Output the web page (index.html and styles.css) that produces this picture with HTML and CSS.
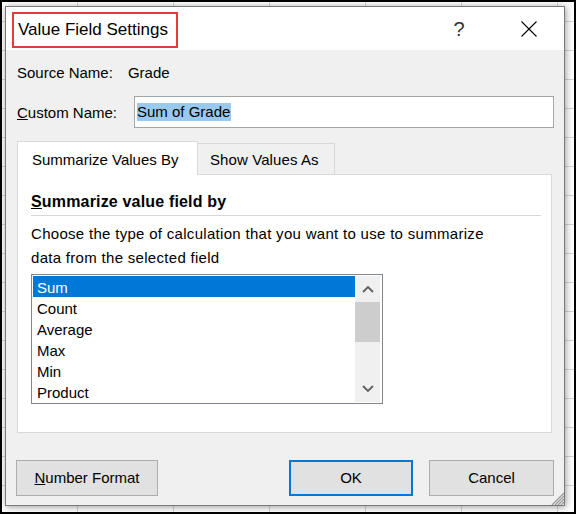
FILE: index.html
```html
<!DOCTYPE html>
<html>
<head>
<meta charset="utf-8">
<link rel="stylesheet" href="styles.css">
</head>
<body>
<div class="desktop">
  <div class="dialog">
    <div class="titlebar">
      <div class="title-box"><span class="title">Value Field Settings</span></div>
      <div class="help">?</div>
      <div class="close">
        <svg width="16" height="16" viewBox="0 0 16 16"><path d="M0.5 0.5 L15.5 15.5 M15.5 0.5 L0.5 15.5" stroke="#000" stroke-width="1.1" fill="none"/></svg>
      </div>
    </div>
    <div class="row source">
      <span class="label">Source Name:</span>
      <span class="value">Grade</span>
    </div>
    <div class="row custom">
      <span class="label custom-label"><u>C</u>ustom Name:</span>
      <div class="input"><span class="selected">Sum of Grade</span></div>
    </div>
    <div class="tabs">
      <div class="tab active">Summarize Values By</div>
      <div class="tab inactive">Show Values As</div>
    </div>
    <div class="panel">
      <div class="heading"><u>S</u>ummarize value field by</div>
      <div class="separator"></div>
      <p class="desc">Choose the type of calculation that you want to use to summarize<br>data from the selected field</p>
      <div class="listbox">
        <ul class="items">
          <li class="item selected-item">Sum</li>
          <li class="item">Count</li>
          <li class="item">Average</li>
          <li class="item">Max</li>
          <li class="item">Min</li>
          <li class="item">Product</li>
        </ul>
        <div class="scrollbar">
          <div class="sb-btn">
            <svg width="12" height="8" viewBox="0 0 12 8"><polyline points="1,7 6,2 11,7" fill="none" stroke="#606060" stroke-width="1.8"/></svg>
          </div>
          <div class="sb-thumb"></div>
          <div class="sb-track"></div>
          <div class="sb-btn">
            <svg width="12" height="8" viewBox="0 0 12 8"><polyline points="1,1 6,6 11,1" fill="none" stroke="#606060" stroke-width="1.8"/></svg>
          </div>
        </div>
      </div>
    </div>
    <div class="footer">
      <div class="btn btn-format"><u>N</u>umber Format</div>
      <div class="btn btn-ok">OK</div>
      <div class="btn btn-cancel">Cancel</div>
    </div>
    <svg class="grip" width="13" height="13" viewBox="0 0 13 13">
      <path d="M1 13 L13 1 M4 13 L13 4 M7 13 L13 7 M10 13 L13 10" stroke="#9a9a9a" stroke-width="1.3" fill="none"/>
    </svg>
  </div>
</div>
</body>
</html>
```

FILE: styles.css
```css
* { box-sizing: border-box; }
html, body { margin: 0; padding: 0; }
body {
  font-family: "Liberation Sans", Arial, sans-serif;
  font-size: 15px;
  color: #000;
  background: #000;
}
.desktop {
  width: 576px;
  height: 514px;
  border: 2px solid #000;
  padding: 4px 0 0 3px;
  background-color: #fff;
  background-image:
    linear-gradient(to right, #d6d6d6 1px, transparent 1px),
    linear-gradient(to bottom, #d6d6d6 1px, transparent 1px);
  background-size: 96px 100%, 100% 29px;
  background-position: 75px 0, 0 19px;
  overflow: hidden;
}
.dialog {
  position: relative;
  width: 560px;
  height: 500px;
  border: 1px solid #7a7a7a;
  background: #f0f0f0;
  box-shadow: 1px 1px 7px rgba(0,0,0,0.4);
}
.titlebar {
  height: 43px;
  background: #fff;
  display: flex;
  align-items: flex-start;
}
.title-box {
  margin: 5px 0 0 6px;
  width: 166px;
  height: 36px;
  border: 2px solid #e8383d;
  padding-left: 4px;
  display: flex;
  align-items: center;
}
.title {
  font-size: 17px;
  line-height: 22px;
  white-space: nowrap;
}
.help {
  margin-left: auto;
  margin-top: 10px;
  width: 20px;
  text-align: center;
  font-size: 20px;
  line-height: 24px;
  color: #333;
}
.close {
  margin-left: 45px;
  margin-right: 20px;
  margin-top: 14px;
  width: 30px;
  height: 16px;
  display: flex;
  justify-content: center;
}
.row {
  display: flex;
  margin-left: 11px;
  line-height: 20px;
  white-space: nowrap;
}
.source { margin-top: 13px; }
.source .value { margin-left: 15px; }
.custom { margin-top: 13px; }
.custom-label {
  width: 117px;
  padding-top: 7px;
}
.input {
  width: 420px;
  height: 32px;
  border: 1px solid #a6a6a6;
  background: #fff;
  padding-left: 2px;
  display: flex;
  align-items: center;
}
.selected {
  background: #99c9ef;
  line-height: 18px;
  padding-right: 1px;
}
.tabs {
  margin-top: 13px;
  margin-left: 11px;
  height: 33px;
  display: flex;
  align-items: flex-end;
}
.tab {
  line-height: 20px;
  white-space: nowrap;
  border: 1px solid #d9d9d9;
  border-bottom: none;
}
.tab.active {
  position: relative;
  z-index: 1;
  width: 181px;
  background: #fff;
  padding: 8px 0 5px 14px;
  margin-bottom: -1px;
}
.tab.inactive {
  width: 137px;
  border-left: none;
  background: #f0f0f0;
  padding: 6px 0 4px 12px;
  letter-spacing: 0.1px;
}
.panel {
  margin-left: 11px;
  width: 535px;
  height: 259px;
  border: 1px solid #d9d9d9;
  background: #fff;
  padding: 17px 10px 0 13px;
}
.heading {
  font-weight: bold;
  font-size: 16px;
  line-height: 20px;
  white-space: nowrap;
  letter-spacing: 0.17px;
}
.separator {
  margin-top: 3px;
  height: 1px;
  background: #d7d7d7;
}
.desc {
  margin: 6px 0 0 0;
  line-height: 24px;
  white-space: nowrap;
  letter-spacing: 0.3px;
}
.listbox {
  margin-top: 4px;
  width: 352px;
  height: 130px;
  border: 1px solid #828790;
  padding: 1px;
  display: flex;
}
.items {
  list-style: none;
  margin: 0;
  padding: 0;
  flex: 1;
}
.item {
  height: 21px;
  line-height: 19px;
  padding: 2px 0 0 4px;
}
.selected-item {
  background: #0078d7;
  color: #fff;
}
.scrollbar {
  width: 25px;
  margin-right: 1px;
  background: #f0f0f0;
  display: flex;
  flex-direction: column;
}
.sb-btn {
  height: 26px;
  display: flex;
  align-items: center;
  justify-content: center;
}
.sb-thumb {
  height: 40px;
  background: #cdcdcd;
}
.sb-track { flex: 1; }
.footer {
  margin-top: 27px;
  padding: 0 10px;
  display: flex;
}
.btn {
  height: 36px;
  border: 1px solid #adadad;
  background: #e1e1e1;
  display: flex;
  align-items: center;
  justify-content: center;
  line-height: 20px;
  white-space: nowrap;
}
.btn-format { width: 142px; }
.btn-ok {
  width: 124px;
  margin-left: auto;
  border: 2px solid #0078d7;
}
.btn-cancel {
  width: 125px;
  margin-left: 16px;
}
.grip {
  position: absolute;
  right: 0;
  bottom: 0;
}
```
